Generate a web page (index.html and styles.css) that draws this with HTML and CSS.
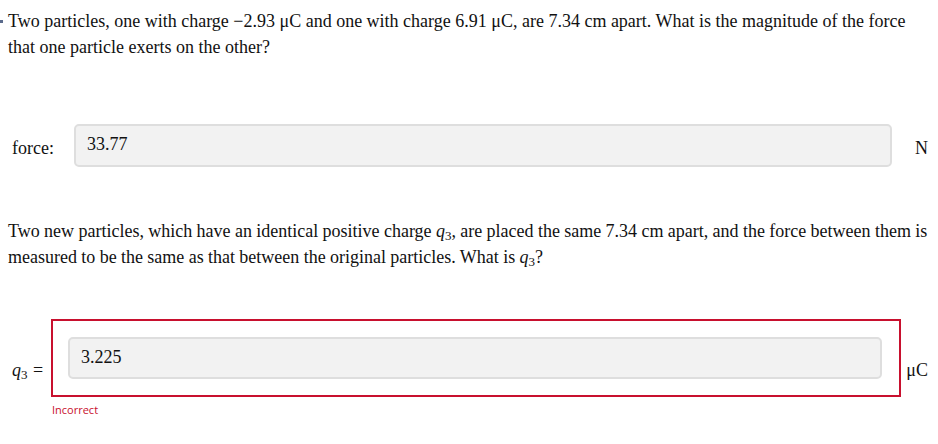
FILE: index.html
```html
<!DOCTYPE html>
<html>
<head>
<meta charset="utf-8">
<link rel="stylesheet" href="styles.css">
</head>
<body>
<div class="page">
  <p class="para para-first"><span class="edge-mark"></span>Two particles, one with charge −2.93 μC and one with charge 6.91 μC, are 7.34 cm apart. What is the magnitude of the force that one particle exerts on the other?</p>

  <div class="row row-force">
    <span class="label label-force">force:</span>
    <div class="field">33.77</div>
    <span class="unit unit-n">N</span>
  </div>

  <p class="para para-second">Two new particles, which have an identical positive charge <i class="var">q</i><sub class="sub">3</sub>, are placed the same 7.34 cm apart, and the force between them is measured to be the same as that between the original particles. What is <i class="var">q</i><sub class="sub">3</sub>?</p>

  <div class="row row-q">
    <span class="label label-q"><i class="var">q</i><sub class="sub">3</sub> <span class="eq">=</span></span>
    <div class="answer-box">
      <div class="field">3.225</div>
    </div>
    <span class="unit unit-uc">μC</span>
  </div>
  <div class="feedback">Incorrect</div>
</div>
</body>
</html>
```
FILE: styles.css
```css
html, body {
  margin: 0;
  padding: 0;
  background: #ffffff;
}

.page {
  width: 938px;
  font-family: "Liberation Serif", "Times New Roman", serif;
  font-size: 18px;
  color: #111;
}

.para {
  margin: 0;
  line-height: 26px;
  padding: 0 8px 0 8px;
}

.para-first {
  padding-top: 8px;
}

.edge-mark {
  display: inline-block;
  width: 3px;
  height: 3px;
  background: #5b6b8c;
  margin-left: -8px;
  margin-right: 5px;
  vertical-align: 4px;
}

.var {
  font-style: italic;
}

.sub {
  font-size: 13px;
  vertical-align: -3px;
  line-height: 1;
}

.row {
  display: flex;
  align-items: center;
  padding: 0 10px 0 12px;
}

.row-force {
  margin-top: 64px;
}

.label-force {
  flex: 0 0 62px;
  margin-top: 5px;
}

.field {
  flex: 1;
  height: 43px;
  box-sizing: border-box;
  border: 2px solid #dedede;
  border-radius: 5px;
  background: #f2f2f2;
  padding: 0 11px;
  display: flex;
  align-items: center;
  padding-bottom: 2px;
}

.unit-n {
  margin-left: 23px;
  margin-top: 5px;
}

.para-second {
  margin-top: 51px;
  padding-right: 0;
  word-spacing: -0.15px;
}

.row-q {
  margin-top: 49px;
}

.label-q {
  flex: 0 0 39px;
  margin-top: 24px;
  white-space: nowrap;
}

.eq {
  margin-left: 1px;
}

.answer-box {
  flex: 1;
  display: flex;
  box-sizing: border-box;
  height: 78px;
  border: 2px solid #c8102e;
  padding: 16px 17px 16px 15px;
}

.answer-box .field {
  height: 42px;
}

.unit-uc {
  margin-left: 5px;
  margin-top: 24px;
}

.feedback {
  margin: 5px 0 0 52px;
  font-family: "Open Sans", "Noto Sans", sans-serif;
  font-size: 11px;
  line-height: 16px;
  color: #c8102e;
}
```
